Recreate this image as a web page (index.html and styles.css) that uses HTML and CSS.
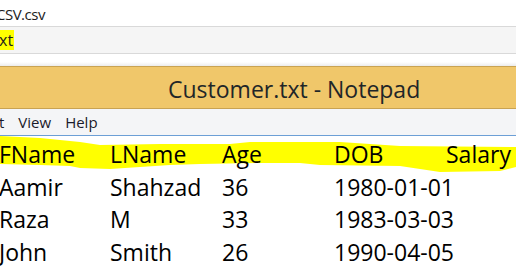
FILE: index.html
```html
<!DOCTYPE html>
<html>
<head>
<meta charset="utf-8">
<link rel="stylesheet" href="styles.css">
</head>
<body>
<div class="screen">
  <div class="tabbar"><span class="tabname">CSV.csv</span></div>
  <div class="pathbar"><span class="hl">xt</span></div>
  <div class="gap"></div>
  <div class="titlebar"><span class="title">Customer.txt - Notepad</span></div>
  <div class="menubar">
    <span class="menu-item cut">t</span>
    <span class="menu-item">View</span>
    <span class="menu-item">Help</span>
  </div>
  <div class="content">
    <svg class="marker" width="516" height="40" viewBox="0 0 516 40" aria-hidden="true">
      <polygon fill="#ffff00" points="0,0 40,2 80,6 100,9 160,8 230,8 250,6 340,6 400,10 516,11 516,31 500,35 440,36 400,30 320,29 300,27 256,27 200,28 170,29 110,33 80,32 70,30 40,29 0,28"/>
    </svg>
    <div class="grid">
      <span>FName</span><span>LName</span><span>Age</span><span>DOB</span><span>Salary</span>
      <span>Aamir</span><span>Shahzad</span><span>36</span><span>1980-01-01</span><span></span>
      <span>Raza</span><span>M</span><span>33</span><span>1983-03-03</span><span></span>
      <span>John</span><span>Smith</span><span>26</span><span>1990-04-05</span><span></span>
    </div>
  </div>
</div>
</body>
</html>
```

FILE: styles.css
```css
html, body {
  margin: 0;
  padding: 0;
  background: #ffffff;
}
.screen {
  width: 516px;
  height: 271px;
  overflow: hidden;
  font-family: "Open Sans", "Noto Sans", sans-serif;
  color: #222;
}
.tabbar {
  height: 26px;
  background: #fff;
  border-bottom: 1px solid #d9d9d9;
  display: flex;
  align-items: flex-end;
}
.tabname {
  font-size: 15px;
  line-height: 24px;
  margin-left: -4px;
  letter-spacing: -0.5px;
  color: #1c1c1c;
}
.pathbar {
  height: 26px;
  background: #f5f5f5;
  border-bottom: 1px solid #d9d9d9;
  display: flex;
  align-items: center;
}
.hl {
  display: block;
  height: 20px;
  width: 14px;
  background: #ffff00;
  font-size: 16px;
  line-height: 21px;
  text-indent: -1px;
  overflow: hidden;
  white-space: nowrap;
  color: #1c1c1c;
}
.gap {
  height: 12px;
  background: linear-gradient(to bottom, #ffffff 0, #ffffff 8px, #ececec 12px);
}
.titlebar {
  height: 41px;
  background: #f0c76a;
  border-top: 1px solid #c9a352;
  border-bottom: 1px solid #c9a352;
  display: flex;
  align-items: center;
  padding-left: 168px;
}
.title {
  font-size: 23px;
  color: #1f2628;
  margin-top: 2px;
}
.menubar {
  height: 26px;
  background: #f4f5f7;
  border-bottom: 1px solid #6c9fd6;
  display: flex;
  align-items: center;
  gap: 14px;
  font-size: 15px;
  color: #1a1a2a;
}
.menu-item.cut {
  margin-left: -1px;
}
.content {
  position: relative;
  background: #fff;
  height: 135px;
}
.marker {
  position: absolute;
  left: 0;
  top: 0;
}
.grid {
  position: relative;
  display: grid;
  grid-template-columns: 111px 112px 112px 112px 112px;
  margin-left: -1px;
  padding-top: 2px;
  font-size: 23px;
  line-height: 32.5px;
  color: #000;
  white-space: nowrap;
}
```
